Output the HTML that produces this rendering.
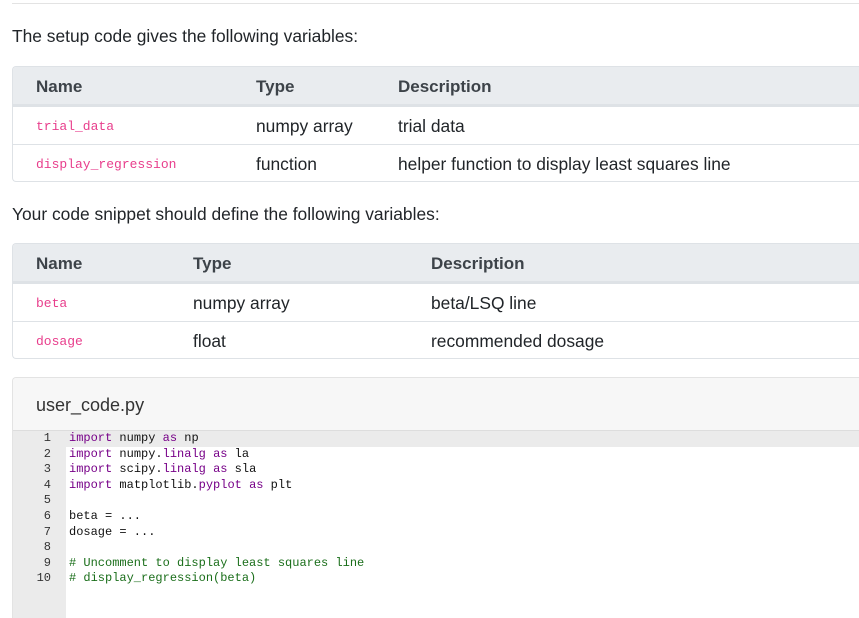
<!DOCTYPE html>
<html><head><style>
*{margin:0;padding:0;box-sizing:border-box}
body{width:859px;height:618px;overflow:hidden;background:#fff;font-family:"Liberation Sans",sans-serif;color:#212529;position:relative}
.a{position:absolute;white-space:nowrap}
.p{font-size:17.4px;color:#212529}
.tbl{position:absolute;left:12px;width:847px;border:1px solid #dee2e6;border-right:none;border-radius:4px 0 0 4px;overflow:hidden}
.hd{background:#e9ecef;height:39px;border-bottom:2px solid #dee2e6;position:relative}
.row{height:38px;border-top:1px solid #dee2e6;position:relative}
.row:first-of-type{border-top:none}
.th{position:absolute;top:10px;font-weight:bold;font-size:17px;color:#3d4349}
.td{position:absolute;top:9px;font-size:17.4px}
.c{position:absolute;top:12px;font-family:"Liberation Mono",monospace;font-size:13px;color:#e83e8c}
.code{font-family:"Liberation Mono",monospace;font-size:12px;line-height:15.6px}
.k{color:#770088}.cm{color:#1a6e1a}
</style></head><body>
<div class="a" style="left:12px;top:3px;width:847px;border-top:1px solid #e3e3e3"></div>
<div class="a p" style="left:12px;top:26px">The setup code gives the following variables:</div>
<div class="tbl" style="top:66px">
<div class="hd"><span class="th" style="left:23px">Name</span><span class="th" style="left:243px">Type</span><span class="th" style="left:385px">Description</span></div>
<div class="row"><span class="c" style="left:23px">trial_data</span><span class="td" style="left:243px">numpy array</span><span class="td" style="left:385px">trial data</span></div>
<div class="row" style="height:37px"><span class="c" style="left:23px">display_regression</span><span class="td" style="left:243px">function</span><span class="td" style="left:385px">helper function to display least squares line</span></div>
</div>
<div class="a p" style="left:12px;top:204px">Your code snippet should define the following variables:</div>
<div class="tbl" style="top:243px">
<div class="hd"><span class="th" style="left:23px">Name</span><span class="th" style="left:180px">Type</span><span class="th" style="left:418px">Description</span></div>
<div class="row"><span class="c" style="left:23px">beta</span><span class="td" style="left:180px">numpy array</span><span class="td" style="left:418px">beta/LSQ line</span></div>
<div class="row" style="height:37px"><span class="c" style="left:23px">dosage</span><span class="td" style="left:180px">float</span><span class="td" style="left:418px">recommended dosage</span></div>
</div>
<div class="a" style="left:12px;top:377px;width:847px;height:241px;border:1px solid #e3e3e3;border-right:none;border-bottom:none;border-radius:4px 0 0 0;background:#fff;overflow:hidden">
<div style="height:53px;background:#f7f7f7;border-bottom:1px solid #ddd;position:relative"><span class="a" style="left:23px;top:17px;font-size:18px;color:#333">user_code.py</span></div>
<div class="a" style="left:0;top:53px;width:53px;height:200px;background:#ebebeb"></div>
<div class="a" style="left:0;top:53px;width:847px;height:16px;background:#ebebeb"></div>
<div class="a code" style="left:0;top:53px;width:38px;text-align:right;color:#333">1<br>2<br>3<br>4<br>5<br>6<br>7<br>8<br>9<br>10</div>
<div class="a code" style="left:56px;top:53px;color:#111"><span class="k">import</span> numpy <span class="k">as</span> np<br><span class="k">import</span> numpy.<span class="k">linalg</span> <span class="k">as</span> la<br><span class="k">import</span> scipy.<span class="k">linalg</span> <span class="k">as</span> sla<br><span class="k">import</span> matplotlib.<span class="k">pyplot</span> <span class="k">as</span> plt<br>&nbsp;<br>beta = ...<br>dosage = ...<br>&nbsp;<br><span class="cm"># Uncomment to display least squares line</span><br><span class="cm"># display_regression(beta)</span></div>
</div>
</body></html>
